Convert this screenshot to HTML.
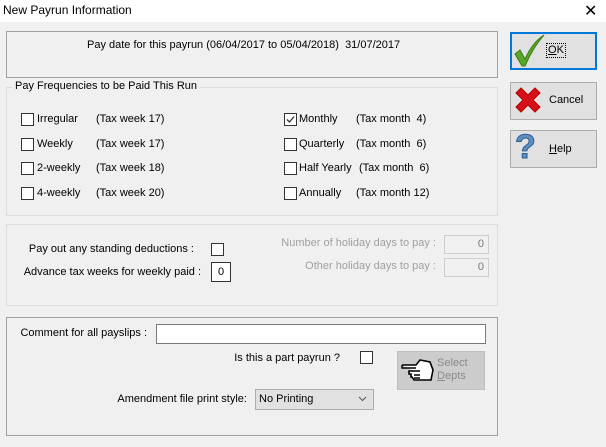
<!DOCTYPE html><html><head><style>
body{margin:0;width:606px;height:447px;background:#f0f0f0;font-family:"Liberation Sans",sans-serif;font-size:11px;color:#000;position:relative;overflow:hidden}
.a{position:absolute;white-space:nowrap}
.r{position:absolute;white-space:nowrap;text-align:right}
.cb{position:absolute;width:11px;height:11px;border:1px solid #333;background:#fff}
.btn{position:absolute;left:510px;width:85px;height:36px;background:#e1e1e1;border:1px solid #adadad}
.g{color:#a0a0a0}
</style></head><body>
<div class="a" style="left:0;top:0;width:606px;height:22px;background:#fff"></div>
<div class="a" style="left:3px;top:3px;font-size:12px">New Payrun Information</div>
<div class="a" style="left:584px;top:1px;font-size:16px">✕</div>

<div class="a" style="left:6px;top:31px;width:490px;height:45px;border:1px solid #a0a0a0"></div>
<div class="a" style="left:87px;top:39px">Pay date for this payrun (06/04/2017 to 05/04/2018)&nbsp;&nbsp;31/07/2017</div>

<div class="a" style="left:6px;top:87px;width:490px;height:127px;border:1px solid #dcdcdc"></div>
<div class="a" style="left:12px;top:80px;background:#f0f0f0;padding:0 3px">Pay Frequencies to be Paid This Run</div>

<div class="cb" style="left:21px;top:113px"></div><div class="a" style="left:37px;top:113px">Irregular</div><div class="a" style="left:96px;top:113px">(Tax week 17)</div>
<div class="cb" style="left:21px;top:138px"></div><div class="a" style="left:37px;top:138px">Weekly</div><div class="a" style="left:96px;top:138px">(Tax week 17)</div>
<div class="cb" style="left:21px;top:162px"></div><div class="a" style="left:37px;top:162px">2-weekly</div><div class="a" style="left:96px;top:162px">(Tax week 18)</div>
<div class="cb" style="left:21px;top:187px"></div><div class="a" style="left:37px;top:187px">4-weekly</div><div class="a" style="left:96px;top:187px">(Tax week 20)</div>

<div class="cb" style="left:284px;top:113px"><svg width="11" height="11" style="position:absolute;left:0;top:0"><path d="M2 5.5L4.5 8L9 2.5" stroke="#333" stroke-width="1.3" fill="none"/></svg></div><div class="a" style="left:299px;top:113px">Monthly</div><div class="a" style="left:356px;top:113px">(Tax month&nbsp; 4)</div>
<div class="cb" style="left:284px;top:138px"></div><div class="a" style="left:299px;top:138px">Quarterly</div><div class="a" style="left:356px;top:138px">(Tax month&nbsp; 6)</div>
<div class="cb" style="left:284px;top:162px"></div><div class="a" style="left:299px;top:162px">Half Yearly</div><div class="a" style="left:359px;top:162px">(Tax month&nbsp; 6)</div>
<div class="cb" style="left:284px;top:187px"></div><div class="a" style="left:299px;top:187px">Annually</div><div class="a" style="left:356px;top:187px">(Tax month 12)</div>

<div class="a" style="left:6px;top:224px;width:490px;height:80px;border:1px solid #dcdcdc"></div>
<div class="r" style="right:412px;top:243px">Pay out any standing deductions :</div>
<div class="cb" style="left:211px;top:243px"></div>
<div class="r" style="right:405px;top:266px">Advance tax weeks for weekly paid :</div>
<div class="a" style="left:211px;top:262px;width:18px;height:18px;border:1px solid #333;background:#fff;text-align:center;line-height:18px">0</div>
<div class="r g" style="right:170px;top:237px">Number of holiday days to pay :</div>
<div class="r g" style="right:170px;top:260px">Other holiday days to pay :</div>
<div class="a" style="left:444px;top:235px;width:42px;height:17px;border:1px solid #ccc;color:#777;text-align:right;padding-right:1px;line-height:17px">0&nbsp;</div>
<div class="a" style="left:444px;top:258px;width:42px;height:17px;border:1px solid #ccc;color:#777;text-align:right;padding-right:1px;line-height:17px">0&nbsp;</div>

<div class="a" style="left:6px;top:317px;width:490px;height:117px;border:1px solid #a0a0a0"></div>
<div class="r" style="right:459px;top:327px">Comment for all payslips :</div>
<div class="a" style="left:156px;top:324px;width:328px;height:18px;border:1px solid #7a7a7a;background:#fff"></div>
<div class="r" style="right:266px;top:352px">Is this a part payrun ?</div>
<div class="cb" style="left:360px;top:351px"></div>
<div class="a" style="left:397px;top:351px;width:86px;height:37px;background:#ccc;border:1px solid #bfbfbf"></div>
<svg class="a" style="left:400px;top:358px" width="36" height="26" viewBox="0 0 36 26"><path d="M2 7h14l4-5 10 2 3 8-2 10H14l-2-3h-1l0-3h-2v-3h5" fill="#fff" stroke="#000" stroke-width="1.6"/><path d="M2 7v3h14M14 13h6M14 17h6M14 20h6" stroke="#000" stroke-width="1.4" fill="none"/></svg>
<div class="a" style="left:437px;top:357px;color:#8a8a8a;line-height:13px">Select<br><u>D</u>epts</div>
<div class="r" style="right:359px;top:393px">Amendment file print style:</div>
<div class="a" style="left:255px;top:389px;width:117px;height:19px;border:1px solid #adadad;background:#e1e1e1"></div>
<div class="a" style="left:259px;top:393px">No Printing</div>
<svg class="a" style="left:358px;top:396px" width="9" height="6"><path d="M1 1l3.5 3.5L8 1" stroke="#555" fill="none"/></svg>

<div class="btn" style="top:32px;border:2px solid #0078d7;width:83px;height:34px"></div>
<svg class="a" style="left:513px;top:34px" width="32" height="34" viewBox="0 0 32 34"><path d="M2 20l5-4 5 9C17 14 23 6 31 1 24 9 17 20 12 32h-3z" fill="#5aa62a" stroke="#3a7d12" stroke-width="1"/></svg>
<div class="a" style="left:546px;top:43px;border:1px dotted #000;padding:0 1px;line-height:13px"><u>O</u>K</div>

<div class="btn" style="top:82px"></div>
<svg class="a" style="left:514px;top:86px" width="28" height="28" viewBox="0 0 28 28"><path d="M2 7l5-5 7 7 7-7 5 5-7 7 7 7-5 5-7-7-7 7-5-5 7-7z" fill="#d5101a" stroke="#b00" stroke-width="1"/></svg>
<div class="a" style="left:549px;top:94px">Cancel</div>

<div class="btn" style="top:130px"></div>
<div class="a" style="left:515px;top:128px;font-size:34px;font-weight:bold;color:#5d8ec0;-webkit-text-stroke:1px #2e5f8f">?</div>
<div class="a" style="left:549px;top:143px"><u>H</u>elp</div>
</body></html>
